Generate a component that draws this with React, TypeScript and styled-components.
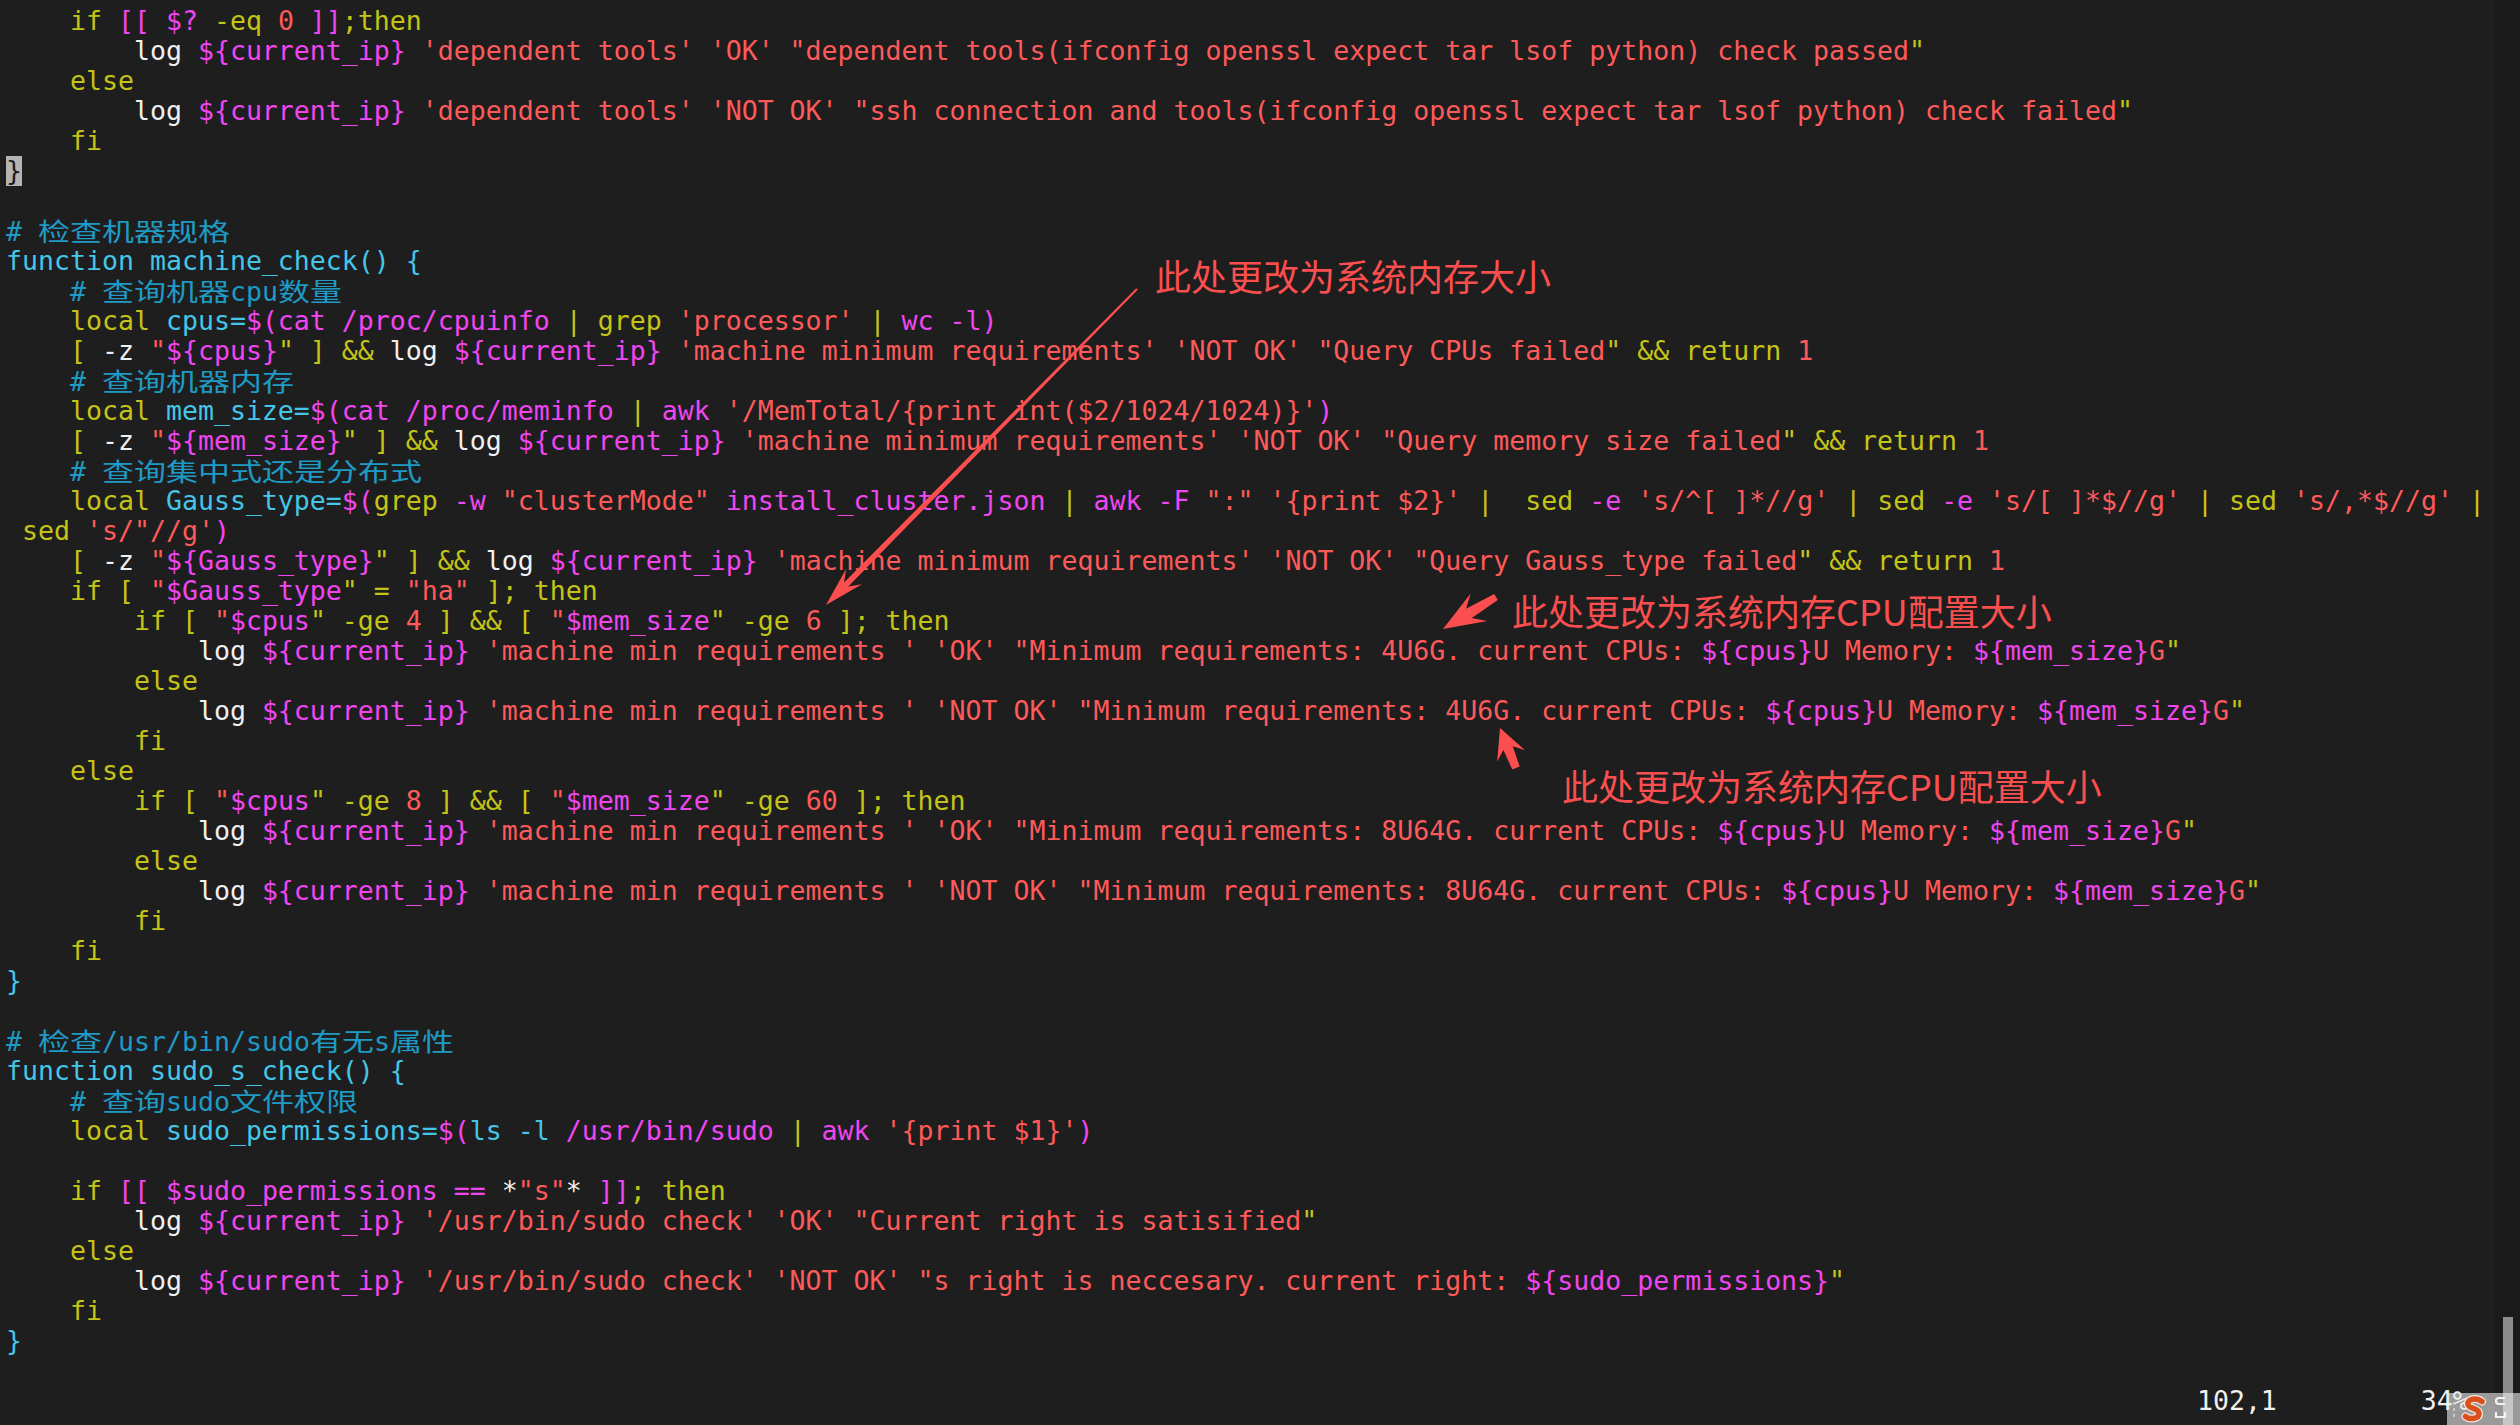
import React, { FC } from "react";
import styled, { createGlobalStyle } from "styled-components";

// vim colours as seen in the terminal
const COLORS: Record<string, string> = {
  w: "#f0f0f0",
  y: "#c4c418",
  m: "#f046f0",
  r: "#ff5a5a",
  c: "#45c6e8",
  d: "#1f9ac4",
};

const NOTE_RED = "#fb4f4f";
const CELL = 16; // one terminal column
const CJK_SIZE = 24.5;

// "§x" switches colour to x for the rest of the line, "§k" is the cursor cell
const LINES: string[] = [
  "    §yif §m[[ $? §y-eq §r0 §m]]§y;then",
  "        §wlog §m${current_ip} §r'dependent tools' 'OK' \"dependent tools(ifconfig openssl expect tar lsof python) check passed§y\"",
  "    §yelse",
  "        §wlog §m${current_ip} §r'dependent tools' 'NOT OK' \"ssh connection and tools(ifconfig openssl expect tar lsof python) check failed§y\"",
  "    §yfi",
  "§k}",
  "",
  "§d# 检查机器规格",
  "§cfunction machine_check() {",
  "    §d# 查询机器cpu数量",
  "    §ylocal §ccpus=§m$(cat /proc/cpuinfo §y| grep §r'processor' §y| §mwc -l)",
  "    §y[ §w-z §r\"§m${cpus}§y\" ] && §wlog §m${current_ip} §r'machine minimum requirements' 'NOT OK' \"Query CPUs failed§y\" && return §r1",
  "    §d# 查询机器内存",
  "    §ylocal §cmem_size=§m$(cat /proc/meminfo §y| §mawk §r'/MemTotal/{print int($2/1024/1024)}'§m)",
  "    §y[ §w-z §r\"§m${mem_size}§y\" ] && §wlog §m${current_ip} §r'machine minimum requirements' 'NOT OK' \"Query memory size failed§y\" && return §r1",
  "    §d# 查询集中式还是分布式",
  "    §ylocal §cGauss_type=§m$(§ygrep §m-w §r\"clusterMode\" §minstall_cluster.json §y| §mawk -F §r\":\" '{print $2}' §y|  sed §m-e §r's/^[ ]*//g' §y| sed §m-e §r's/[ ]*$//g' §y| sed §r's/,*$//g' §y|",
  " §ysed §r's/\"//g'§m)",
  "    §y[ §w-z §r\"§m${Gauss_type}§y\" ] && §wlog §m${current_ip} §r'machine minimum requirements' 'NOT OK' \"Query Gauss_type failed§y\" && return §r1",
  "    §yif [ §r\"§m$Gauss_type§y\" = §r\"ha\" §y]; then",
  "        §yif [ §r\"§m$cpus§y\" -ge §r4 §y] && [ §r\"§m$mem_size§y\" -ge §r6 §y]; then",
  "            §wlog §m${current_ip} §r'machine min requirements ' 'OK' \"Minimum requirements: 4U6G. current CPUs: §m${cpus}§rU Memory: §m${mem_size}§rG§y\"",
  "        §yelse",
  "            §wlog §m${current_ip} §r'machine min requirements ' 'NOT OK' \"Minimum requirements: 4U6G. current CPUs: §m${cpus}§rU Memory: §m${mem_size}§rG§y\"",
  "        §yfi",
  "    §yelse",
  "        §yif [ §r\"§m$cpus§y\" -ge §r8 §y] && [ §r\"§m$mem_size§y\" -ge §r60 §y]; then",
  "            §wlog §m${current_ip} §r'machine min requirements ' 'OK' \"Minimum requirements: 8U64G. current CPUs: §m${cpus}§rU Memory: §m${mem_size}§rG§y\"",
  "        §yelse",
  "            §wlog §m${current_ip} §r'machine min requirements ' 'NOT OK' \"Minimum requirements: 8U64G. current CPUs: §m${cpus}§rU Memory: §m${mem_size}§rG§y\"",
  "        §yfi",
  "    §yfi",
  "§c}",
  "",
  "§d# 检查/usr/bin/sudo有无s属性",
  "§cfunction sudo_s_check() {",
  "    §d# 查询sudo文件权限",
  "    §ylocal §csudo_permissions=§m$(§cls -l §m/usr/bin/sudo §y| §mawk §r'{print $1}'§m)",
  "",
  "    §yif §m[[ $sudo_permissions == §w*§r\"s\"§w* §m]]§y; then",
  "        §wlog §m${current_ip} §r'/usr/bin/sudo check' 'OK' \"Current right is satisified§y\"",
  "    §yelse",
  "        §wlog §m${current_ip} §r'/usr/bin/sudo check' 'NOT OK' \"s right is neccesary. current right: §m${sudo_permissions}§y\"",
  "    §yfi",
  "§c}",
  "",
];

const STATUS = " ".repeat(137) + "102,1" + " ".repeat(9) + "34%";

type Seg = { c: string; t: string };

const parse = (src: string): Seg[] => {
  const out: Seg[] = [];
  src.split("§").forEach((part, i) => {
    if (i === 0) {
      if (part) out.push({ c: "w", t: part });
      return;
    }
    if (part.length > 1) out.push({ c: part[0], t: part.slice(1) });
  });
  return out;
};

const CJK = /([\u4e00-\u9fff]+)/;

// terminal draws each CJK char stretched over two columns
const withCjk = (t: string) =>
  t.split(CJK).map((p, i) =>
    i % 2 ? (
      <Wide key={i} $n={p.length}>
        {p}
      </Wide>
    ) : (
      p
    )
  );

type Pt = [number, number];

// tapered arrow with swept-back head, like a screenshot-tool arrow
const arrow = (t: Pt, p: Pt, head: number, wing: number, neck: number, tail: number) => {
  const dx = p[0] - t[0];
  const dy = p[1] - t[1];
  const len = Math.hypot(dx, dy);
  const ux = dx / len;
  const uy = dy / len;
  const at = (d: number, s: number) =>
    `${(p[0] - ux * d - uy * s).toFixed(1)},${(p[1] - uy * d + ux * s).toFixed(1)}`;
  return [
    at(0, 0),
    at(head, wing),
    at(head * 0.72, neck),
    at(len, tail),
    at(len, -tail),
    at(head * 0.72, -neck),
    at(head, -wing),
  ].join(" ");
};

const ARROWS = [
  arrow([1137, 289], [826, 605], 40, 11, 3, 1),
  arrow([1496, 597], [1443, 629], 42, 16, 5.5, 3.5),
  arrow([1516, 768], [1500, 728], 30, 15, 5, 4),
];

const NOTES = [
  { x: 1155, y: 257, text: "此处更改为系统内存大小" },
  { x: 1512, y: 592, text: "此处更改为系统内存CPU配置大小" },
  { x: 1562, y: 767, text: "此处更改为系统内存CPU配置大小" },
];

const Line: FC<{ src: string }> = ({ src }) => (
  <Row>
    {parse(src).map((s, i) =>
      s.c === "k" ? (
        <Cursor key={i}>{s.t}</Cursor>
      ) : (
        <Tok key={i} $c={COLORS[s.c]}>
          {withCjk(s.t)}
        </Tok>
      )
    )}
  </Row>
);

const App: FC = () => (
  <>
    <GlobalStyle />
    <Page>
      <Editor>
        {LINES.map((l, i) => (
          <Line key={i} src={l} />
        ))}
        <Row>
          <Tok $c={COLORS.w}>{STATUS}</Tok>
        </Row>
      </Editor>
      <Gutter>
        <Thumb />
      </Gutter>

      <Overlay width="2520" height="1425" viewBox="0 0 2520 1425">
        {ARROWS.map((pts, i) => (
          <polygon key={i} points={pts} fill={NOTE_RED} />
        ))}
      </Overlay>
      {NOTES.map((n, i) => (
        <Note key={i} $x={n.x} $y={n.y}>
          {n.text}
        </Note>
      ))}

      <Ime>
        <Grip>
          <i />
          <i />
          <i />
        </Grip>
        <svg width="26" height="28" viewBox="0 0 26 28">
          <path
            d="M21 6.5C16 2.5 6 3.5 7 9.5C8 14 18 13 18 18.5C18 24 9 25 4.5 21.5"
            fill="none"
            stroke="#f6e4da"
            strokeWidth="8"
            strokeLinecap="round"
          />
          <path
            d="M21 6.5C16 2.5 6 3.5 7 9.5C8 14 18 13 18 18.5C18 24 9 25 4.5 21.5"
            fill="none"
            stroke="#d9501c"
            strokeWidth="5.5"
            strokeLinecap="round"
          />
        </svg>
        <svg width="14" height="28" viewBox="0 0 14 28">
          <path d="M12 3H6a3 3 0 0 0 0 6h6" fill="none" stroke="#f2f2f2" strokeWidth="2.2" />
          <path d="M3 17v5h9v-5" fill="none" stroke="#f2f2f2" strokeWidth="2.2" />
        </svg>
      </Ime>
    </Page>
  </>
);

const GlobalStyle = createGlobalStyle`
  html, body {
    margin: 0;
    padding: 0;
    background: #1e1e1e;
    overflow: hidden;
  }
`;

const Page = styled.div`
  position: relative;
  display: flex;
  width: 2520px;
  height: 1425px;
  background: #1e1e1e;
  overflow: hidden;
`;

const Editor = styled.div`
  flex: 1;
  padding: 6px 0 0 6px;
  font-family: "DejaVu Sans Mono", "Noto Sans CJK SC", monospace;
  font-size: ${CELL / 0.60205}px;
  color: #f0f0f0;
`;

const Row = styled.div`
  height: 30px;
  line-height: 30px;
  white-space: pre;
`;

const Tok = styled.span<{ $c: string }>`
  color: ${({ $c }) => $c};
`;

const Wide = styled.span<{ $n: number }>`
  display: inline-block;
  width: ${({ $n }) => $n * CJK_SIZE}px;
  margin-right: ${({ $n }) => $n * (CELL * 2 - CJK_SIZE)}px;
  transform: scaleX(${(CELL * 2) / CJK_SIZE});
  transform-origin: left center;
  font-family: "Noto Sans CJK SC", sans-serif;
  font-size: ${CJK_SIZE}px;
  line-height: 30px;
`;

const Cursor = styled.span`
  display: inline-block;
  width: 1ch;
  height: 30px;
  vertical-align: top;
  background: #b4b4b4;
  color: #1e1e1e;
`;

const Gutter = styled.div`
  width: 25px;
  background: #1a1a1a;
  display: flex;
  flex-direction: column;
  justify-content: flex-end;
  padding-left: 8px;
  box-sizing: border-box;
`;

const Thumb = styled.div`
  width: 10px;
  height: 108px;
  background: #8c8c8c;
`;

const Overlay = styled.svg`
  position: absolute;
  left: 0;
  top: 0;
  pointer-events: none;
`;

const Note = styled.div<{ $x: number; $y: number }>`
  position: absolute;
  left: ${({ $x }) => $x}px;
  top: ${({ $y }) => $y}px;
  font-family: "Noto Sans CJK SC", sans-serif;
  font-size: 36px;
  line-height: 1;
  color: ${NOTE_RED};
  white-space: nowrap;
`;

const Ime = styled.div`
  position: absolute;
  right: 0;
  bottom: 0;
  width: 73px;
  height: 32px;
  background: rgba(238, 238, 238, 0.6);
  display: flex;
  align-items: center;
  gap: 6px;
  padding-left: 6px;
  box-sizing: border-box;
`;

const Grip = styled.div`
  display: flex;
  flex-direction: column;
  gap: 3px;

  & > i {
    width: 2px;
    height: 3px;
    background: #c9c9c9;
  }
`;

export default App;
